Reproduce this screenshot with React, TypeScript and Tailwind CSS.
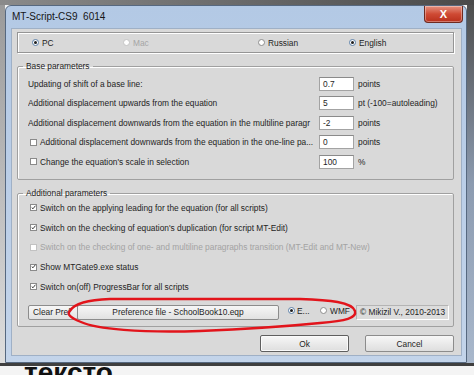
const baseRows = [
  { label: "Updating of shift of a base line:", value: "0.7", unit: "points", check: false },
  { label: "Additional displacement upwards from the equation", value: "5", unit: "pt (-100=autoleading)", check: false },
  { label: "Additional displacement downwards from the equation in the multiline paragr", value: "-2", unit: "points", check: false },
  { label: "Additional displacement downwards from the equation in the one-line pa...", value: "0", unit: "points", check: true },
  { label: "Change the equation's scale in selection", value: "100", unit: "%", check: true },
];

const extraRows = [
  { label: "Switch on the applying leading for the equation (for all scripts)", on: true, disabled: false },
  { label: "Switch on the checking of equation's duplication (for script MT-Edit)", on: true, disabled: false },
  { label: "Switch on the checking of one- and multiline paragraphs transition (MT-Edit and MT-New)", on: false, disabled: true },
  { label: "Show MTGate9.exe status", on: true, disabled: false },
  { label: "Switch on(off) ProgressBar for all scripts", on: true, disabled: false },
];

function Radio({ on, disabled }: { on?: boolean; disabled?: boolean }) {
  return (
    <span
      className={`flex h-[7px] w-[7px] shrink-0 items-center justify-center rounded-full border bg-white ${
        disabled ? "border-[#c4c4c4]" : on ? "border-[#5a7fa8]" : "border-[#8d8d8d]"
      }`}
    >
      {on && <span className="h-[3px] w-[3px] rounded-full bg-[#1e1e1e]" />}
    </span>
  );
}

function Check({ on, disabled }: { on?: boolean; disabled?: boolean }) {
  return (
    <span
      className={`flex h-[7px] w-[7px] shrink-0 items-center justify-center border bg-white ${
        disabled ? "border-[#c2c2c2]" : "border-[#8a8a8a]"
      }`}
    >
      {on && (
        <svg width="7" height="7" viewBox="0 0 7 7" className="-mt-[1px]">
          <path d="M1 3.6 L2.8 5.3 L6.2 1" fill="none" stroke="#1e1e1e" strokeWidth="1.2" />
        </svg>
      )}
    </span>
  );
}

function Legend({ children }: { children: React.ReactNode }) {
  return <legend className="ml-[5px] px-[3px] text-[8.35px] leading-[10px] text-[#1e1e1e]">{children}</legend>;
}

export default function App() {
  return (
    <div className="relative h-[375px] w-[474px] overflow-hidden bg-[#f1f1f1] font-['Liberation_Sans',Arial,sans-serif] text-[#1e1e1e]">
      {/* desktop strip above the window */}
      <div className="h-[5px] bg-gradient-to-r from-[#8a8a8a] via-[#6a6a6a] to-[#4a4a4a]" />

      <div className="flex h-[358px]">
        <div className="w-[5px] bg-gradient-to-b from-[#9a9a9a] to-[#dedede]" />

        {/* dialog window */}
        <div className="flex w-[462px] flex-col rounded-t-[6px] border border-[#56687f] bg-gradient-to-b from-[#b3c9e5] to-[#c3d4ea]">
          <div className="flex h-[22px] items-start justify-between">
            <span className="mt-[5px] pl-[6px] text-[10px] leading-[12px] text-[#161616]">MT-Script-CS9&nbsp; 6014</span>
            <div className="mr-[3px] flex h-[17px] w-[39px] items-center justify-center rounded-b-[4px] border border-t-0 border-[#6e2a20] bg-gradient-to-b from-[#e4907f] via-[#cf4a34] to-[#b92f1b] shadow-[inset_0_0_0_1px_rgba(255,255,255,0.35)]">
              <span className="text-[11px] font-bold leading-none text-white">X</span>
            </div>
          </div>

          {/* client area */}
          <div className="ml-[5px] mr-[4px] flex h-[328px] flex-col border border-[#9fb0c6] bg-[#d9d9d9] text-[8.35px] leading-[10px]">
            {/* PC / Mac / language */}
            <div className="ml-[5px] mt-[3px] flex h-[21px] w-[437px] items-center border border-[#959595] pl-[14px] shadow-[inset_1px_1px_0_#fff,1px_1px_0_#fff]">
              <div className="flex w-[91px] items-center gap-[3px]">
                <Radio on />
                <span>PC</span>
              </div>
              <div className="flex w-[135px] items-center gap-[3px] text-[#a5a5a5]">
                <Radio disabled />
                <span>Mac</span>
              </div>
              <div className="flex w-[91px] items-center gap-[3px]">
                <Radio />
                <span>Russian</span>
              </div>
              <div className="flex items-center gap-[3px]">
                <Radio on />
                <span>English</span>
              </div>
            </div>

            {/* Base parameters */}
            <fieldset className="ml-[5px] mt-[8px] h-[119px] w-[437px] rounded-[2px] border border-[#a0a0a0] shadow-[inset_1px_1px_0_#fff]">
              <Legend>Base parameters</Legend>
              <div className="flex flex-col pt-[3px]">
                {baseRows.map((r) => (
                  <div key={r.label} className="grid h-[19.5px] grid-cols-[291px_35px_1fr] items-center pl-[10px]">
                    <div className="flex items-center gap-[3px] overflow-hidden whitespace-nowrap">
                      {r.check && (
                        <span className="ml-[2px]">
                          <Check />
                        </span>
                      )}
                      <span>{r.label}</span>
                    </div>
                    <div className="flex h-[14px] items-center border border-[#a3a3a3] border-t-[#8a8a8a] bg-white pl-[3px]">
                      {r.value}
                    </div>
                    <span className="pl-[4px]">{r.unit}</span>
                  </div>
                ))}
              </div>
            </fieldset>

            {/* Additional parameters */}
            <fieldset className="ml-[5px] mt-[8px] h-[139px] w-[437px] rounded-[2px] border border-[#a0a0a0] shadow-[inset_1px_1px_0_#fff]">
              <Legend>Additional parameters</Legend>
              <div className="flex flex-col">
                {extraRows.map((r) => (
                  <div
                    key={r.label}
                    className={`flex h-[19.75px] items-center gap-[3px] whitespace-nowrap pl-[12px] ${
                      r.disabled ? "text-[#a3a3a3]" : ""
                    }`}
                  >
                    <Check on={r.on} disabled={r.disabled} />
                    <span>{r.label}</span>
                  </div>
                ))}

                <div className="mt-[8px] flex h-[15px] items-center pl-[10px]">
                  <div className="flex h-[15px] w-[50px] items-center overflow-hidden whitespace-nowrap rounded-[2px] border border-[#8c8c8c] bg-gradient-to-b from-[#f6f6f6] to-[#e2e2e2] pl-[4px]">
                    Clear Pref
                  </div>
                  <div className="-ml-[1px] flex h-[15px] w-[202px] items-center justify-center rounded-[2px] border border-[#8c8c8c] bg-gradient-to-b from-[#f6f6f6] to-[#e2e2e2]">
                    Preference file - SchoolBook10.eqp
                  </div>
                  <div className="-mt-[3px] ml-[9px] flex w-[32px] items-center gap-[2px]">
                    <Radio on />
                    <span>E...</span>
                  </div>
                  <div className="-mt-[3px] flex w-[36px] items-center gap-[3px]">
                    <Radio />
                    <span>WMF</span>
                  </div>
                  <div className="flex h-[15px] w-[93px] items-center whitespace-nowrap border border-[#b4b4b4] border-b-white border-r-white bg-[#dcdcdc] pl-[3px]">
                    © Mikizil V., 2010-2013
                  </div>
                </div>
              </div>
            </fieldset>

            {/* Ok / Cancel */}
            <div className="mt-[8px] flex justify-end gap-[16px] pr-[7px]">
              <div className="flex h-[17px] w-[89px] items-center justify-center rounded-[2px] border border-[#5f5f5f] bg-gradient-to-b from-[#f7f7f7] to-[#dedede] shadow-[inset_0_0_0_1px_#fafafa]">
                Ok
              </div>
              <div className="flex h-[17px] w-[89px] items-center justify-center rounded-[2px] border border-[#8c8c8c] bg-gradient-to-b from-[#f7f7f7] to-[#dedede]">
                Cancel
              </div>
            </div>
          </div>
        </div>

        <div className="w-[7px] bg-gradient-to-b from-[#4e4e4e] via-[#8c9bb0] to-[#a9b8cc]" />
      </div>

      {/* document behind, bottom */}
      <div className="h-[3px] bg-[#3f3f3f]" />
      <div className="h-[9px] overflow-hidden bg-[#f4f4f4] pl-[24px]">
        <div className="-mt-[7px] text-[28px] font-bold leading-[28px] text-[#111]">тексто</div>
      </div>

      {/* hand-drawn red mark */}
      <svg className="pointer-events-none absolute left-0 top-0" width="474" height="375" viewBox="0 0 474 375">
        <path
          d="M70 311 C74 303 88 300 110 299 L300 299 C330 300 352 302 355 311 C357 318 346 321 320 323 C290 326 250 329 200 331 C140 333 96 329 81 322 C71 318 66 314 70 311"
          fill="none"
          stroke="#e2141b"
          strokeWidth="2.4"
          strokeLinecap="round"
        />
      </svg>
    </div>
  );
}
